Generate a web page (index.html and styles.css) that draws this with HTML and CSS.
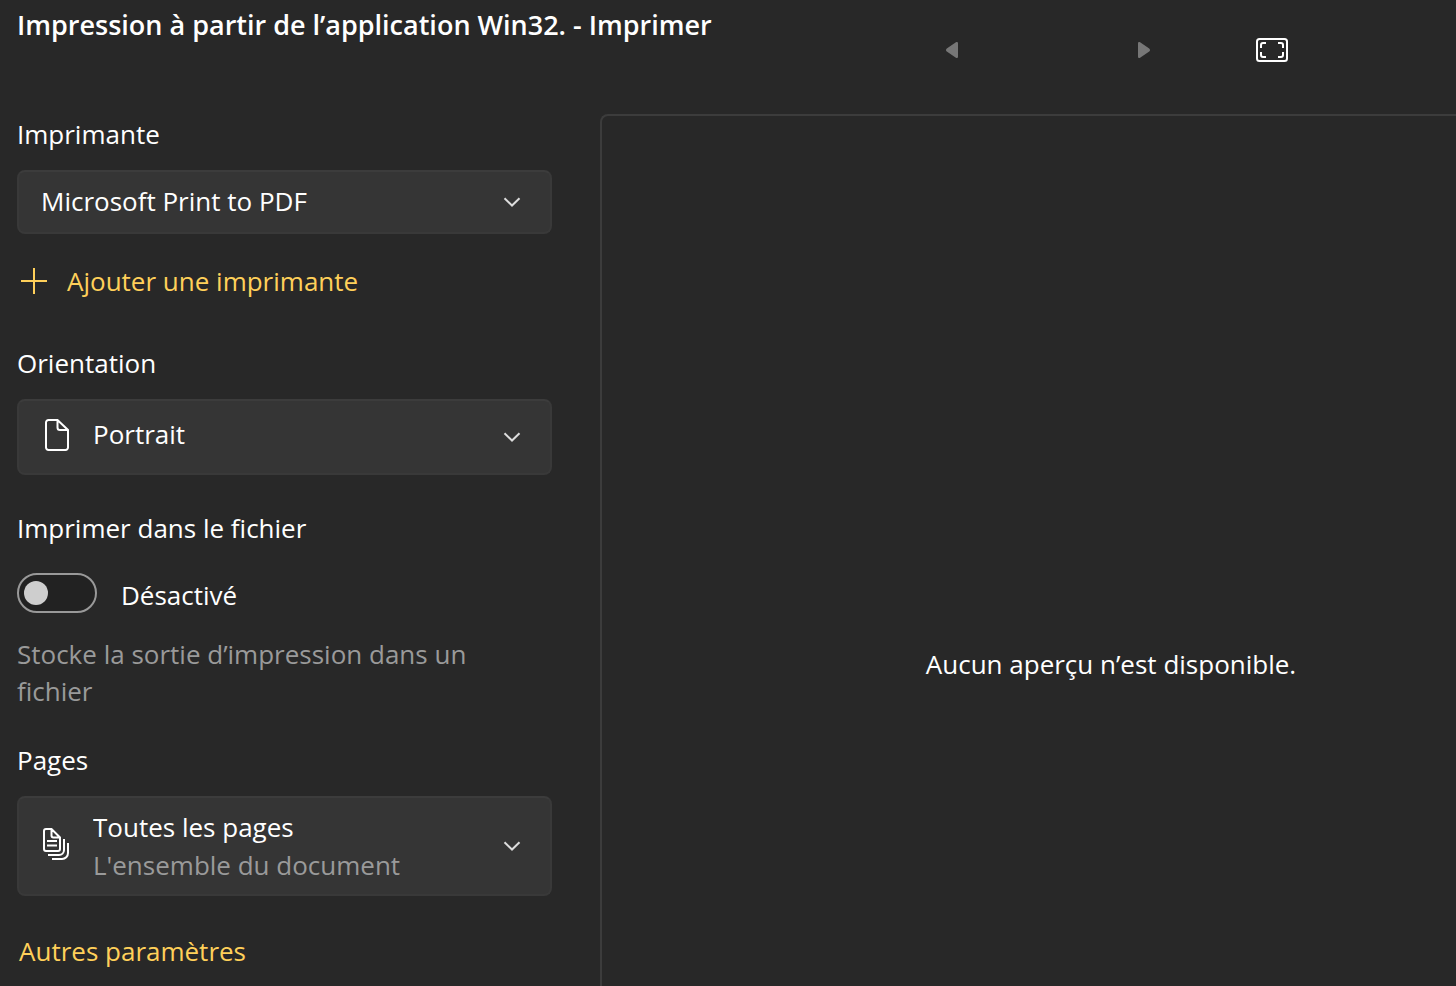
FILE: index.html
```html
<!DOCTYPE html>
<html lang="fr">
<head>
    <meta charset="UTF-8">
    <meta name="viewport" content="width=device-width, initial-scale=1.0">
    <title>Imprimer</title>
    <link rel="stylesheet" href="styles.css">
</head>
<body>
    <header class="header">
        <h1>Impression à partir de l’application Win32. - Imprimer</h1>
        <div class="toolbar">
            <button class="tool-btn" type="button" aria-label="Page précédente" disabled>
                <svg width="12" height="16" viewBox="0 0 12 16" fill="currentColor"><path d="M12 1.3v13.4c0 1.1-1.2 1.7-2.1 1L.8 9.6a2 2 0 0 1 0-3.2L9.9.3C10.8-.4 12 .2 12 1.3z"/></svg>
            </button>
            <button class="tool-btn" type="button" aria-label="Page suivante" disabled>
                <svg width="12" height="16" viewBox="0 0 12 16" fill="currentColor"><path d="M0 1.3v13.4c0 1.1 1.2 1.7 2.1 1l9.1-6.1a2 2 0 0 0 0-3.2L2.1.3C1.2-.4 0 .2 0 1.3z"/></svg>
            </button>
            <button class="tool-btn" type="button" aria-label="Ajuster à la page">
                <svg width="32" height="24" viewBox="0 0 32 24" fill="none" stroke="currentColor" stroke-width="2">
                    <rect x="1" y="1" width="30" height="22" rx="2.5"/>
                    <path d="M5 10V7a2 2 0 0 1 2-2h3M22 5h3a2 2 0 0 1 2 2v3M27 14v3a2 2 0 0 1-2 2h-3M10 19H7a2 2 0 0 1-2-2v-3"/>
                </svg>
            </button>
        </div>
    </header>

    <div class="content">
        <form class="settings">
            <section class="section">
                <label class="label" for="printer">Imprimante</label>
                <div class="combo">
                    <select id="printer">
                        <option>Microsoft Print to PDF</option>
                    </select>
                    <svg class="chevron" width="18" height="10" viewBox="0 0 18 10"><path d="M1.5 1.2 9 8.5l7.5-7.3"/></svg>
                </div>
                <a class="link add-link" href="#">
                    <svg width="26" height="26" viewBox="0 0 26 26" stroke="currentColor" stroke-width="2"><path d="M13 0v26M0 13h26"/></svg>
                    Ajouter une imprimante
                </a>
            </section>

            <section class="section">
                <label class="label" for="orientation">Orientation</label>
                <div class="combo combo-icon">
                    <svg class="icon" width="28" height="32" viewBox="0 0 28 32"><path d="M14.5 1h-9A2.5 2.5 0 0 0 3 3.5v25A2.5 2.5 0 0 0 5.5 31h17a2.5 2.5 0 0 0 2.5-2.5V11zM14.5 1v7.5A2.5 2.5 0 0 0 17 11h8"/></svg>
                    <select id="orientation">
                        <option>Portrait</option>
                        <option>Paysage</option>
                    </select>
                    <svg class="chevron" width="18" height="10" viewBox="0 0 18 10"><path d="M1.5 1.2 9 8.5l7.5-7.3"/></svg>
                </div>
            </section>

            <section class="section">
                <label class="label" for="toFile">Imprimer dans le fichier</label>
                <div class="toggle-row">
                    <input class="toggle" type="checkbox" role="switch" id="toFile">
                    <span class="state">Désactivé</span>
                </div>
                <p class="hint">Stocke la sortie d’impression dans un fichier</p>
            </section>

            <section class="section">
                <label class="label" for="pages">Pages</label>
                <div class="combo combo-icon combo-tall">
                    <svg class="icon" width="28" height="32" viewBox="0 0 28 32"><path d="M8.5 1H3a2 2 0 0 0-2 2v18a2 2 0 0 0 2 2h12a2 2 0 0 0 2-2V9.500zM8.500 1v6.500a2 2 0 0 0 2 2H17M4 13h10M4 17.500h10M5 27h11a5 5 0 0 0 5-5V11M9 31h10a6 6 0 0 0 6-6V15"/></svg>
                    <select id="pages" aria-describedby="pagesNote">
                        <option>Toutes les pages</option>
                    </select>
                    <span class="note" id="pagesNote">L'ensemble du document</span>
                    <svg class="chevron" width="18" height="10" viewBox="0 0 18 10"><path d="M1.5 1.2 9 8.5l7.5-7.3"/></svg>
                </div>
            </section>

            <a class="link more-link" href="#">Autres paramètres</a>
        </form>

        <main class="preview">
            <p>Aucun aperçu n’est disponible.</p>
        </main>
    </div>
</body>
</html>
```
FILE: styles.css
```css
:root {
    --background-color: #282828;
    --field-color: #353535;
    --border-color: #3c3c3c;
    --text-color: #ffffff;
    --muted-color: #9a9a9a;
    --accent-color: #ffd05a;
}

* {
    box-sizing: border-box;
}

body {
    margin: 0;
    min-height: 100vh;
    display: flex;
    flex-direction: column;
    background-color: var(--background-color);
    color: var(--text-color);
    font-family: 'Segoe UI', 'Open Sans', sans-serif;
    font-size: 26px;
    line-height: 36px;
}

svg {
    display: block;
    flex: none;
}

.header {
    display: flex;
    justify-content: space-between;
    align-items: flex-start;
    padding: 8px 152px 0 17px;
    height: 114px;
    flex: none;
}

h1 {
    margin: 0;
    font-size: 27px;
    font-weight: 600;
    line-height: 34px;
}

.toolbar {
    display: flex;
    gap: 64px;
    padding-top: 10px;
}

.tool-btn {
    display: flex;
    align-items: center;
    justify-content: center;
    width: 64px;
    height: 64px;
    padding: 0;
    border: none;
    background: none;
    color: var(--text-color);
}

.tool-btn:first-child {
    margin-right: 64px;
}

.tool-btn:disabled {
    color: #777777;
}

.content {
    display: grid;
    grid-template-columns: 600px 1fr;
    flex: 1;
}

.settings {
    padding: 0 48px 0 17px;
}

.section {
    margin-bottom: 32px;
}

.label {
    display: block;
    margin-bottom: 18px;
}

.section:first-child {
    padding-top: 2px;
}

.combo {
    display: grid;
    grid-template-columns: 24px 1fr 54px;
    align-items: center;
    height: 64px;
    border: 2px solid #393939;
    border-top-color: var(--border-color);
    border-radius: 8px;
    background-color: var(--field-color);
}

/* the select covers the whole box so the icon and chevron open it too */
.combo select {
    grid-area: 1 / 1 / 2 / 4;
    height: 100%;
    width: 100%;
    padding: 0 54px 2px 22px;
    border: none;
    background: none;
    color: inherit;
    font: inherit;
    appearance: none;
}

.combo option {
    background-color: var(--field-color);
}

.combo-icon {
    height: 76px;
    margin-bottom: 35px;
}

.combo-icon select {
    padding: 0 54px 6px 74px;
}

.combo .icon {
    grid-area: 1 / 1 / 2 / 4;
    margin: 0 0 4px 24px;
    pointer-events: none;
    fill: none;
    stroke: currentColor;
    stroke-width: 2;
}

.chevron {
    grid-area: 1 / 3 / 2 / 4;
    margin-left: 7px;
    pointer-events: none;
    fill: none;
    stroke: #dddddd;
    stroke-width: 2;
}

.combo-tall {
    height: 100px;
    margin-bottom: 37px;
}

.combo-tall select {
    padding-bottom: 38px;
}

.note {
    grid-area: 1 / 1 / 2 / 4;
    padding: 38px 0 0 74px;
    color: var(--muted-color);
    pointer-events: none;
}

.link {
    color: var(--accent-color);
    text-decoration: none;
}

.add-link {
    display: flex;
    align-items: center;
    gap: 20px;
    margin: 29px 0 46px 4px;
}

.more-link {
    margin-left: 2px;
}

.toggle-row {
    display: flex;
    align-items: center;
    gap: 24px;
    margin-top: 27px;
}

.toggle {
    display: flex;
    align-items: center;
    width: 80px;
    height: 40px;
    margin: 0;
    padding: 0 5px;
    border: 2px solid #999999;
    border-radius: 20px;
    background-color: #222222;
    appearance: none;
}

.toggle::before {
    content: '';
    width: 24px;
    height: 24px;
    border-radius: 50%;
    background-color: #cecece;
}

.toggle:checked {
    justify-content: flex-end;
    background-color: var(--accent-color);
}

.state {
    padding-top: 4px;
}

.hint {
    max-width: 480px;
    margin: 23px 0 32px;
    line-height: 37px;
    color: var(--muted-color);
}

/* open on the right and bottom, where the pane meets the window edge */
.preview {
    display: flex;
    align-items: center;
    justify-content: center;
    padding: 226px 0 0 164px;
    border: 2px solid var(--border-color);
    border-width: 2px 0 0 2px;
    border-radius: 8px 0 0 0;
}

.preview p {
    margin: 0;
}
```
